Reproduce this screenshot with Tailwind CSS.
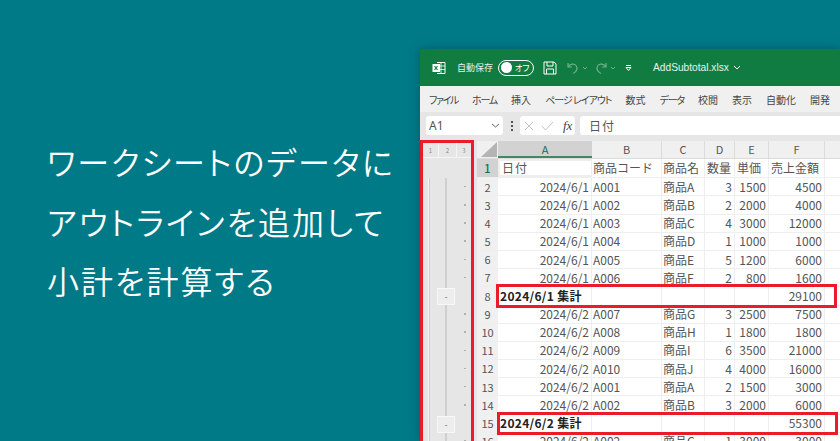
<!DOCTYPE html>
<html lang="ja">
<head>
<meta charset="UTF-8">
<title>ワークシートのデータにアウトラインを追加して小計を計算する</title>
<script src="https://cdn.jsdelivr.net/npm/@tailwindcss/browser@4"></script>
</head>
<body class="w-[840px] h-[441px] overflow-hidden bg-[#017a88] font-['Noto_Sans_CJK_JP','Noto_Sans',sans-serif] flex">

  <!-- left heading -->
  <div class="w-[420px] shrink-0 pl-[47px] pt-[132px]">
    <h1 class="text-[32px] leading-[59.500px] font-[350] tracking-[2px] text-white whitespace-nowrap [font-feature-settings:'palt']">ワークシートのデータに<br>アウトラインを追加して<br>小計を計算する</h1>
  </div>

  <!-- excel window -->
  <div class="w-[420px] shrink-0 mt-[49px] h-[392px] flex flex-col bg-[#e6e6e6] shadow-[0_0_10px_rgba(0,0,0,0.25)]">

    <!-- title bar -->
    <div class="h-[37px] bg-[#107c41] flex items-center text-white text-[9px] pl-[12px] shrink-0 whitespace-nowrap">
      <svg width="14" height="14" viewBox="0 0 14 14" class="shrink-0">
        <path d="M5 1.500h8v11H5" fill="none" stroke="#fff" stroke-width="1"/>
        <path d="M9 1.500v11M5 5h8M5 8.500h8" stroke="#fff" stroke-width="0.8"/>
        <rect x="0.500" y="3" width="7.500" height="8" fill="#fff"/>
        <path d="M2.500 5l3 4M5.500 5l-3 4" stroke="#107c41" stroke-width="1.200"/>
      </svg>
      <span class="ml-[11px] text-white/90">自動保存</span>
      <div class="ml-[5px] w-[36px] h-[16px] shrink-0 rounded-full border border-white flex items-center pl-[2px]">
        <span class="w-[10.500px] h-[10.500px] shrink-0 rounded-full bg-white"></span>
        <span class="ml-[3px] text-[8.500px] leading-none [font-feature-settings:'palt']">オフ</span>
      </div>
      <svg width="14" height="14" viewBox="0 0 14 14" class="ml-[9px] shrink-0" fill="none" stroke="#fff" stroke-width="1">
        <path d="M1 1h10l2 2v10H1z"/><path d="M4 1v4h6V1M3.500 13V8h7v5"/>
      </svg>
      <svg width="14" height="14" viewBox="0 0 14 14" class="ml-[9px] shrink-0" fill="none" stroke="#6fae8c" stroke-width="1.200">
        <path d="M2 2v4h4M2 6c2-3 6-4 8-1.500s1 6-3 8"/>
      </svg>
      <svg width="6" height="4" viewBox="0 0 6 4" class="ml-[2px] shrink-0" fill="none" stroke="#6fae8c"><path d="M1 1l2 2 2-2"/></svg>
      <svg width="14" height="14" viewBox="0 0 14 14" class="ml-[6px] shrink-0" fill="none" stroke="#6fae8c" stroke-width="1.200">
        <path d="M12 2v4H8M12 6c-2-3-6-4-8-1.500s-1 6 3 8"/>
      </svg>
      <svg width="6" height="4" viewBox="0 0 6 4" class="ml-[2px] shrink-0" fill="none" stroke="#6fae8c"><path d="M1 1l2 2 2-2"/></svg>
      <svg width="7" height="8" viewBox="0 0 7 8" class="ml-[9px] shrink-0" fill="none" stroke="#fff"><path d="M1 1.500h5M1 3.500h5l-2.500 3z"/></svg>
      <span class="ml-[21px] text-[10.200px] text-white/90 font-['Liberation_Sans',sans-serif]">AddSubtotal.xlsx</span>
      <svg width="8" height="5" viewBox="0 0 8 5" class="ml-[4px] shrink-0" fill="none" stroke="#fff" stroke-width="1"><path d="M1 1l3 3 3-3"/></svg>
    </div>

    <!-- menu -->
    <div class="h-[26px] bg-[#f0f0f0] flex items-center text-[10px] text-[#444] pl-[9px] gap-[14px] whitespace-nowrap shrink-0 [font-feature-settings:'palt']">
      <span class="tracking-[-1.400px]">ファイル</span><span class="tracking-[-1.200px]">ホーム</span><span>挿入</span><span class="tracking-[-1px]">ページ レイアウト</span><span>数式</span><span class="tracking-[-1.200px]">データ</span><span>校閲</span><span>表示</span><span>自動化</span><span>開発</span>
    </div>

    <!-- formula bar -->
    <div class="h-[27px] bg-[#e6e6e6] flex items-center pl-[6px] text-[12px] text-[#555] shrink-0">
      <div class="w-[77px] h-[19px] bg-white rounded-[3px] flex items-center justify-between px-[3px]">
        <span class="font-['Noto_Sans',sans-serif]">A1</span>
        <svg width="9" height="5" viewBox="0 0 9 5" fill="none" stroke="#666"><path d="M1 1l3.500 3 3.500-3"/></svg>
      </div>
      <div class="w-[17px] flex flex-col items-center gap-[2px]">
        <span class="w-[2px] h-[2px] bg-[#555]"></span><span class="w-[2px] h-[2px] bg-[#555]"></span><span class="w-[2px] h-[2px] bg-[#555]"></span>
      </div>
      <div class="w-[55px] h-[19px] bg-white rounded-[3px] flex items-center pl-[4px]">
        <svg width="10" height="10" viewBox="0 0 10 10" fill="none" stroke="#c4c4c4"><path d="M1 1l8 8M9 1l-8 8"/></svg>
        <svg width="13" height="10" viewBox="0 0 13 10" fill="none" stroke="#c4c4c4" class="ml-[7px]"><path d="M1 5l3.500 4L12 1"/></svg>
        <span class="ml-[9px] font-['Liberation_Serif',serif] italic text-[13px] leading-none text-[#444]">fx</span>
      </div>
      <div class="ml-[5px] flex-1 h-[19px] bg-white rounded-l-[3px] flex items-center pl-[9px] tracking-[1px]">日付</div>
    </div>

    <!-- sheet area -->
    <div class="relative flex-1 flex min-h-0 overflow-hidden mt-[1px]">
      <!-- outline gutter -->
      <div class="w-[54px] shrink-0 border-[3px] border-b-0 border-[#ea1c2c] bg-[#e6e6e6] flex flex-col">
        <div class="h-[15px] flex text-[6px] text-[#888] shrink-0 border-b border-[#f5f5f5]">
          <span class="w-[16px] border-r border-[#f5f5f5] flex items-center justify-center">1</span>
          <span class="w-[18px] border-r border-[#f5f5f5] flex items-center justify-center">2</span>
          <span class="flex-1 flex items-center justify-center">3</span>
        </div>
        <div class="flex-1 flex pl-[5px] pt-[20px] min-h-0">
          <div class="w-[2px] bg-[#cfcfcf] border-l border-[#f5f5f5]"></div>
          <div class="ml-[7px] w-[18px] flex flex-col items-center">
            <div class="w-[2px] h-[110px] bg-[#cfcfcf]"></div>
            <div class="w-[18px] h-[17px] shrink-0 bg-[#ededed] border border-[#f8f8f8] flex items-center justify-center text-[9px] text-[#777] leading-none">-</div>
            <div class="w-[2px] h-[111px] shrink-0 bg-[#cfcfcf]"></div>
            <div class="w-[18px] h-[17px] shrink-0 bg-[#ededed] border border-[#f8f8f8] flex items-center justify-center text-[9px] text-[#777] leading-none">-</div>
            <div class="w-[2px] flex-1 bg-[#cfcfcf]"></div>
          </div>
          <!-- level 3 dots, one per detail row -->
          <div id="dots" class="ml-[9px] w-[2px] -mt-[0.500px]"></div>
        </div>
      </div>

      <!-- grid -->
      <div class="flex-1 min-w-0 ml-[3px] pt-[1px]">
        <div class="h-[18px] flex text-[11px] text-[#555] bg-[#f0f0f0] border-b border-[#dcdcdc]">
          <div class="w-[21px] shrink-0 relative">
            <svg width="16" height="15" viewBox="0 0 16 15" class="absolute right-[1px] bottom-[1px]"><path d="M16 0v15H0z" fill="#b4b4b4"/></svg>
          </div>
          <div class="w-[94px] shrink-0 text-center bg-[#d2d2d2] text-[#1f6b45] border-b-2 border-[#3f8a64]">A</div>
          <div class="w-[70px] shrink-0 text-center border-r border-[#dcdcdc]">B</div>
          <div class="w-[43px] shrink-0 text-center border-r border-[#dcdcdc]">C</div>
          <div class="w-[30px] shrink-0 text-center border-r border-[#dcdcdc]">D</div>
          <div class="w-[34px] shrink-0 text-center border-r border-[#dcdcdc]">E</div>
          <div class="w-[56px] shrink-0 text-center border-r border-[#dcdcdc]">F</div>
          <div class="flex-1"></div>
        </div>
        <div id="rows" class="bg-white"></div>
      </div>

      <!-- red highlights over rows 8 and 15 -->
      <div class="absolute left-[76px] top-[144px] w-[341px] h-[24px] border-[3px] border-[#ea1c2c]"></div>
      <div class="absolute left-[77px] top-[272px] w-[341px] h-[23px] border-[3px] border-[#ea1c2c]"></div>
    </div>
  </div>

  <script>
    const data = [
      ['日付', '商品コード', '商品名', '数量', '単価', '売上金額'],
      ['2024/6/1', 'A001', '商品A', 3, 1500, 4500],
      ['2024/6/1', 'A002', '商品B', 2, 2000, 4000],
      ['2024/6/1', 'A003', '商品C', 4, 3000, 12000],
      ['2024/6/1', 'A004', '商品D', 1, 1000, 1000],
      ['2024/6/1', 'A005', '商品E', 5, 1200, 6000],
      ['2024/6/1', 'A006', '商品F', 2, 800, 1600],
      ['2024/6/1 集計', '', '', '', '', 29100],
      ['2024/6/2', 'A007', '商品G', 3, 2500, 7500],
      ['2024/6/2', 'A008', '商品H', 1, 1800, 1800],
      ['2024/6/2', 'A009', '商品I', 6, 3500, 21000],
      ['2024/6/2', 'A010', '商品J', 4, 4000, 16000],
      ['2024/6/2', 'A001', '商品A', 2, 1500, 3000],
      ['2024/6/2', 'A002', '商品B', 3, 2000, 6000],
      ['2024/6/2 集計', '', '', '', '', 55300],
      ['2024/6/2', 'A002', '商品C', 1, 3000, 3000],
    ];
    const cell = 'h-full shrink-0 border-r border-[#eeeeee] px-[2px] flex items-center overflow-visible whitespace-nowrap';
    document.getElementById('rows').innerHTML = data.map((r, i) => {
      const n = i + 1;
      const first = i === 0;
      const total = r[0].includes('集計');
      const head = first ? 'bg-[#d2d2d2] text-[#1f6b45] font-medium' : 'bg-[#f0f0f0] text-[#555]';
      const a = first
        ? 'w-[94px] border-2 border-[#3f8a64] justify-start tracking-[1px]'
        : total ? 'w-[94px] justify-start font-bold text-[#222] tracking-[0.300px]' : 'w-[94px] justify-end';
      const right = first ? 'justify-start' : 'justify-end';
      const height = first ? 'h-[19.200px]' : 'h-[18.200px]';
      return `<div class="${height} flex text-[12px] text-[#555] border-b border-[#eeeeee]">
        <div class="w-[21px] h-full shrink-0 flex items-center justify-center text-[11px] ${head}">${n}</div>
        <div class="${cell} ${a}">${r[0]}</div>
        <div class="${cell} w-[70px] !pl-[1px]">${r[1]}</div>
        <div class="${cell} w-[43px] !pl-[1px]">${r[2]}</div>
        <div class="${cell} w-[30px] ${right}">${r[3]}</div>
        <div class="${cell} w-[34px] ${right}">${r[4]}</div>
        <div class="${cell} w-[56px] ${right}">${r[5]}</div>
      </div>`;
    }).join('');

    // outline dots sit beside detail rows only, totals get a blank slot
    document.getElementById('dots').innerHTML = data.slice(1).map(r =>
      `<div class="h-[18.200px] flex items-center">${r[0].includes('集計') ? '' : '<span class="w-[1.500px] h-[1.500px] bg-[#b0b0b0]"></span>'}</div>`
    ).join('');
  </script>
</body>
</html>
